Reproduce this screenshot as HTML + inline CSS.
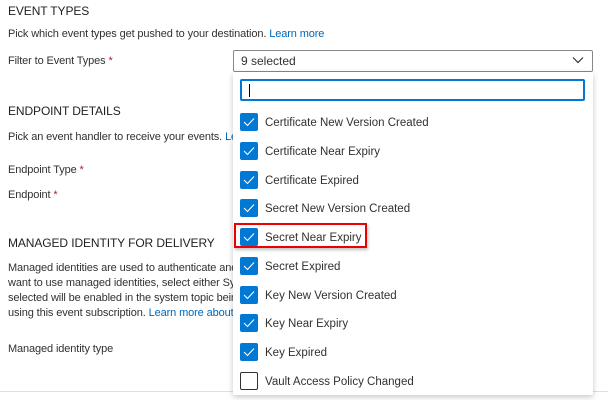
<!DOCTYPE html>
<html><head><meta charset="utf-8"><style>
*{margin:0;padding:0;box-sizing:border-box}
body{width:608px;height:400px;background:#fff;font-family:"Liberation Sans",sans-serif;color:#323130;position:relative;overflow:hidden}
.t{position:absolute;white-space:nowrap;font-size:11px;line-height:14px;letter-spacing:-0.12px}
.h{font-size:12px;color:#201f1e;letter-spacing:-0.1px}
a{color:#0067b8;text-decoration:none}
.r{color:#a4262c}
.line{position:absolute;left:0;top:391px;width:608px;height:1px;background:#e1dfdd}
.dd{position:absolute;left:233px;top:50px;width:360px;height:22px;border:1px solid #8a8886;border-radius:2px;font-size:12px;padding:3px 0 0 7px}
.chev{position:absolute;right:8px;top:5px}
.panel{position:absolute;left:233px;top:72px;width:360px;height:323px;background:#fff;box-shadow:0 2px 6px rgba(0,0,0,.22);border-radius:0 0 2px 2px}
.search{position:absolute;left:7px;top:7px;width:345px;height:22px;border:2px solid #0078d4;border-radius:2px}
.search:after{content:"";position:absolute;left:7px;top:3px;width:1px;height:13px;background:#000}
.row{position:absolute;left:7px;height:20px;font-size:11.5px;line-height:20px;white-space:nowrap;color:#323130}
.cb{display:inline-block;width:18px;height:18px;background:#0078d4;border-radius:2px;vertical-align:middle;margin-right:7px;position:relative;top:-1px}
.cb svg{position:absolute;left:3px;top:4px}
.cb.off{background:#fff;border:1px solid #323130}
.red{position:absolute;left:1px;top:151px;width:133px;height:25px;border:2px solid #e00;box-shadow:1px 2px 3px rgba(0,0,0,.25)}
</style></head><body>
<div class="t h" style="left:8px;top:4px">EVENT TYPES</div>
<div class="t" style="left:8px;top:27px">Pick which event types get pushed to your destination. <a>Learn more</a></div>
<div class="t" style="left:8px;top:54px">Filter to Event Types <span class="r">*</span></div>
<div class="t h" style="left:8px;top:104px">ENDPOINT DETAILS</div>
<div class="t" style="left:8px;top:130px">Pick an event handler to receive your events. <a>Learn more</a></div>
<div class="t" style="left:8px;top:163px">Endpoint Type <span class="r">*</span></div>
<div class="t" style="left:8px;top:188px">Endpoint <span class="r">*</span></div>
<div class="t h" style="left:8px;top:236px">MANAGED IDENTITY FOR DELIVERY</div>
<div class="t" style="left:8px;top:261px;line-height:15px">Managed identities are used to authenticate and<br>want to use managed identities, select either Sys<br>selected will be enabled in the system topic bein<br>using this event subscription. <a>Learn more about</a></div>
<div class="t" style="left:8px;top:342px">Managed identity type</div>
<div class="line"></div>
<div class="dd">9 selected<svg class="chev" width="12" height="8" viewBox="0 0 12 8"><path d="M1 1.5L6 6.5L11 1.5" fill="none" stroke="#323130" stroke-width="1.2"/></svg></div>
<div class="panel">
<div class="search"></div>
<div class="red"></div>
</div>
<div style="position:absolute;left:233px;top:73px">
<div class="row" style="top:40px"><span class="cb"><svg width="12" height="10" viewBox="0 0 12 10"><path d="M1 5L4.5 8.5L11 1.5" fill="none" stroke="#fff" stroke-width="1.1"/></svg></span>Certificate New Version Created</div>
<div class="row" style="top:69px"><span class="cb"><svg width="12" height="10" viewBox="0 0 12 10"><path d="M1 5L4.5 8.5L11 1.5" fill="none" stroke="#fff" stroke-width="1.1"/></svg></span>Certificate Near Expiry</div>
<div class="row" style="top:98px"><span class="cb"><svg width="12" height="10" viewBox="0 0 12 10"><path d="M1 5L4.5 8.5L11 1.5" fill="none" stroke="#fff" stroke-width="1.1"/></svg></span>Certificate Expired</div>
<div class="row" style="top:126px"><span class="cb"><svg width="12" height="10" viewBox="0 0 12 10"><path d="M1 5L4.5 8.5L11 1.5" fill="none" stroke="#fff" stroke-width="1.1"/></svg></span>Secret New Version Created</div>
<div class="row" style="top:155px"><span class="cb"><svg width="12" height="10" viewBox="0 0 12 10"><path d="M1 5L4.5 8.5L11 1.5" fill="none" stroke="#fff" stroke-width="1.1"/></svg></span>Secret Near Expiry</div>
<div class="row" style="top:184px"><span class="cb"><svg width="12" height="10" viewBox="0 0 12 10"><path d="M1 5L4.5 8.5L11 1.5" fill="none" stroke="#fff" stroke-width="1.1"/></svg></span>Secret Expired</div>
<div class="row" style="top:213px"><span class="cb"><svg width="12" height="10" viewBox="0 0 12 10"><path d="M1 5L4.5 8.5L11 1.5" fill="none" stroke="#fff" stroke-width="1.1"/></svg></span>Key New Version Created</div>
<div class="row" style="top:241px"><span class="cb"><svg width="12" height="10" viewBox="0 0 12 10"><path d="M1 5L4.5 8.5L11 1.5" fill="none" stroke="#fff" stroke-width="1.1"/></svg></span>Key Near Expiry</div>
<div class="row" style="top:270px"><span class="cb"><svg width="12" height="10" viewBox="0 0 12 10"><path d="M1 5L4.5 8.5L11 1.5" fill="none" stroke="#fff" stroke-width="1.1"/></svg></span>Key Expired</div>
<div class="row" style="top:299px"><span class="cb off"></span>Vault Access Policy Changed</div>
</div>
</body></html>
